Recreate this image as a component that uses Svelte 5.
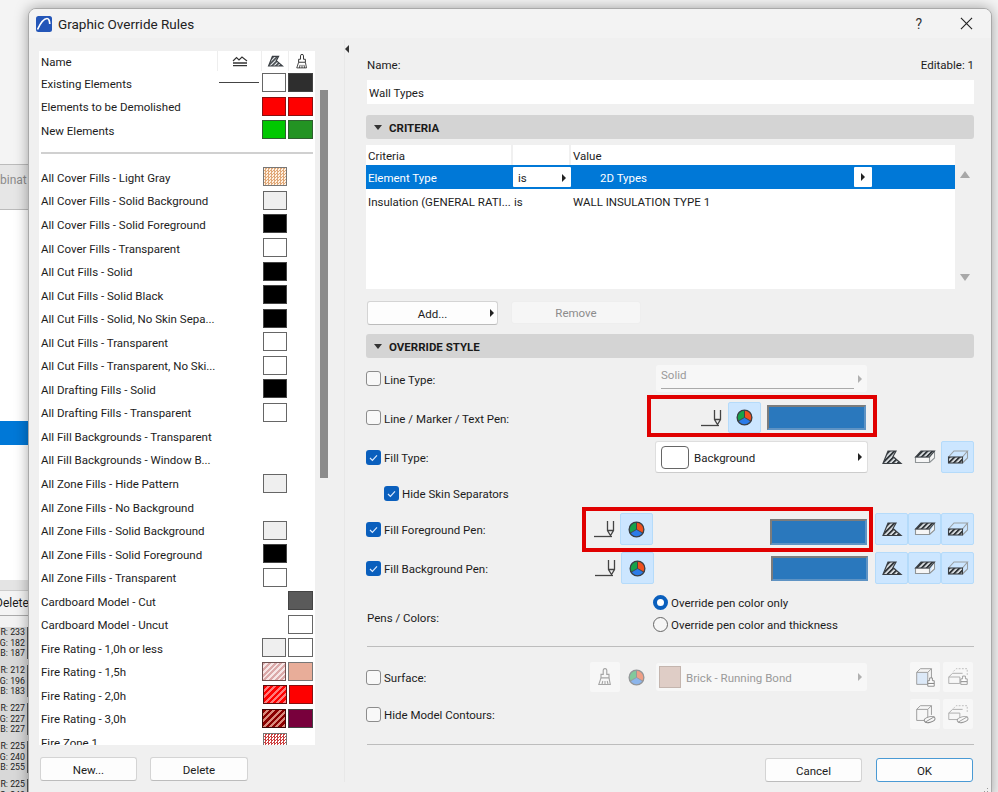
<script>
  const top = [
    ['Existing Elements', 'white', 'dark', true],
    ['Elements to be Demolished', 'red', 'red'],
    ['New Elements', 'green', 'dgreen']
  ];
  const rows = [
    ['All Cover Fills - Light Gray', 'tan', ''],
    ['All Cover Fills - Solid Background', 'light', ''],
    ['All Cover Fills - Solid Foreground', 'black', ''],
    ['All Cover Fills - Transparent', 'white', ''],
    ['All Cut Fills - Solid', 'black', ''],
    ['All Cut Fills - Solid Black', 'black', ''],
    ['All Cut Fills - Solid, No Skin Sepa...', 'black', ''],
    ['All Cut Fills - Transparent', 'white', ''],
    ['All Cut Fills - Transparent, No Ski...', 'white', ''],
    ['All Drafting Fills - Solid', 'black', ''],
    ['All Drafting Fills - Transparent', 'white', ''],
    ['All Fill Backgrounds - Transparent', '', ''],
    ['All Fill Backgrounds - Window B...', '', ''],
    ['All Zone Fills - Hide Pattern', 'light', ''],
    ['All Zone Fills - No Background', '', ''],
    ['All Zone Fills - Solid Background', 'light', ''],
    ['All Zone Fills - Solid Foreground', 'black', ''],
    ['All Zone Fills - Transparent', 'white', ''],
    ['Cardboard Model - Cut', '', 'grey'],
    ['Cardboard Model - Uncut', '', 'white'],
    ['Fire Rating - 1,0h or less', 'light', 'white'],
    ['Fire Rating - 1,5h', 'pinkh', 'salmon'],
    ['Fire Rating - 2,0h', 'redh', 'red'],
    ['Fire Rating - 3,0h', 'maroonh', 'maroon'],
    ['Fire Zone 1', 'dots', '']
  ];
  const rgb = [[233, 182, 187], [212, 196, 183], [227, 227, 227], [225, 240, 255], [225, 240, 255]];
</script>

{#snippet wheel(cls = '')}
  <svg class="wheel {cls}" viewBox="0 0 18 18">
    <path d="M9 9V1.2A7.8 7.8 0 0 0 2.2 12.9Z" fill="#16a34a" />
    <path d="M9 9V1.2A7.8 7.8 0 0 1 15.8 12.9Z" fill="#f0501e" />
    <path d="M9 9L2.2 12.9A7.8 7.8 0 0 0 15.8 12.9Z" fill="#2b7be8" />
    <circle cx="9" cy="9" r="7.8" fill="none" stroke="#3a3f44" stroke-width="1.4" />
    <path d="M9 9V1.2M9 9L2.2 12.9M9 9L15.8 12.9" stroke="#3a3f44" stroke-width="1" />
  </svg>
{/snippet}

{#snippet pen()}
  <svg class="pen" viewBox="0 0 24 22">
    <path d="M1 18.5H19" stroke="#444" stroke-width="1.3" fill="none" />
    <path d="M14.5 3V12.5L17.5 17.5L20.5 12.5V3M14.5 12.5H20.5" stroke="#444" stroke-width="1.3" fill="none" />
  </svg>
{/snippet}

{#snippet fillIcon()}
  <svg class="ic" viewBox="0 0 22 18">
    <path d="M2 15.5L7 3H15L12 8.5L20 15.5Z" fill="url(#hatch)" stroke="#3a3f44" stroke-width="1.2" />
  </svg>
{/snippet}

{#snippet boxTop()}
  <svg class="ic" viewBox="0 0 22 18">
    <path d="M1.5 9H15.5V14.5H1.5ZM15.5 14.5L20.5 10V3" fill="#f6f6f6" stroke="#8f9496" stroke-width="1.1" />
    <path d="M1.5 9L7 3H20.5L15.5 9Z" fill="url(#hatch)" stroke="#3a3f44" stroke-width="1.1" />
  </svg>
{/snippet}

{#snippet boxFront()}
  <svg class="ic" viewBox="0 0 22 18">
    <path d="M1.5 9L7 3H20.5L15.5 9M20.5 3V10L15.5 15" fill="none" stroke="#9a9fa2" stroke-width="1.1" />
    <rect x="1.5" y="9" width="14" height="6" fill="url(#hatch)" stroke="#3a3f44" stroke-width="1.1" />
  </svg>
{/snippet}

{#snippet trio()}
  <div class="trio">
    <span class="tb on">{@render fillIcon()}</span>
    <span class="tb on">{@render boxTop()}</span>
    <span class="tb on">{@render boxFront()}</span>
  </div>
{/snippet}

{#snippet brush(cls)}
  <svg class={cls} viewBox="0 0 18 20">
    <path d="M7 2.5a2 2 0 0 1 4 0V7h2.5v4H4.5V7H7Z" fill="none" stroke="currentColor" stroke-width="1.3" />
    <path d="M4.5 11L2 18.5H15L13.5 11M6.5 14.5L5.5 18.5M9 14.5V18.5M11.5 14.5L12.5 18.5" fill="none" stroke="currentColor" stroke-width="1.2" />
  </svg>
{/snippet}

{#snippet check(on, cls = '')}
  <span class="cb {cls}" class:checked={on}>
    {#if on}<svg viewBox="0 0 15 15"><path d="M4 8l2.4 2.4L11 5.4" fill="none" stroke="#dbeaff" stroke-width="1.2" /></svg>{/if}
  </span>
{/snippet}

{#snippet sw(kind)}
  {#if kind}<span class="sw {kind}"></span>{:else}<span class="sw none"></span>{/if}
{/snippet}

<svg class="defs" width="0" height="0" aria-hidden="true">
  <defs>
    <pattern id="hatch" width="3.6" height="3.6" patternUnits="userSpaceOnUse" patternTransform="rotate(45)">
      <rect width="3.6" height="3.6" fill="#eef2f5" />
      <rect width="2" height="3.6" fill="#33383c" />
    </pattern>
  </defs>
</svg>

<div class="page">
  <aside class="strip">
    <div class="s-top"></div>
    <div class="s-band">binat</div>
    <div class="s-white"></div>
    <div class="s-sel"></div>
    <div class="s-white2"></div>
    <div class="s-grey"></div>
    <div class="s-del">Delete</div>
    <div class="s-gap"></div>
    <div class="s-rgb">
      {#each rgb as c}
        <div class="s-col"><span>R: {c[0]}</span><span>G: {c[1]}</span><span>B: {c[2]}</span></div>
      {/each}
    </div>
  </aside>

  <section class="dialog">
    <header class="title">
      <svg class="logo" viewBox="0 0 16 16">
        <rect width="16" height="16" rx="2.5" fill="#2456b8" />
        <path d="M1.5 13.5C4.5 7 7.5 2.5 11 2.5C13 2.5 13.6 5 13.8 8" fill="none" stroke="#fff" stroke-width="1.7" />
      </svg>
      <span class="ttext">Graphic Override Rules</span>
      <span class="help">?</span>
      <svg class="close" viewBox="0 0 14 14"><path d="M1 1L13 13M13 1L1 13" stroke="#222" stroke-width="1.2" /></svg>
    </header>

    <div class="body">
      <div class="left">
        <div class="list-wrap">
          <div class="list">
            <div class="lhead">
              <span class="lh-name">Name</span>
              <span class="lh-ic c1">
                <svg viewBox="0 0 16 12" class="hic"><path d="M1 6L4.5 2.5L7 5L10 2L15 6" fill="none" stroke="#333" stroke-width="1.1" /><path d="M1 8H15M1 10.6H15" stroke="#333" stroke-width="1.3" /></svg>
              </span>
              <span class="lh-ic c2">
                <svg viewBox="0 0 22 18" class="hic2"><path d="M2 15.5L7 3H15L12 8.5L20 15.5Z" fill="url(#hatch)" stroke="#3a3f44" stroke-width="1.5" /></svg>
              </span>
              <span class="lh-ic c3">{@render brush('hbrush')}</span>
            </div>
            {#each top as r}
              <div class="row">
                <span class="rname">{r[0]}</span>
                {#if r[3]}<span class="lineprev"></span>{/if}
                {@render sw(r[1])}
                {@render sw(r[2])}
              </div>
            {/each}
            <div class="lsep"></div>
            {#each rows as r}
              <div class="row">
                <span class="rname">{r[0]}</span>
                {@render sw(r[1])}
                {@render sw(r[2])}
              </div>
            {/each}
          </div>
          <div class="track"><div class="thumb"></div></div>
        </div>
        <div class="lbtns">
          <span class="btn w97">New...</span>
          <span class="btn w98">Delete</span>
        </div>
      </div>

      <div class="vline"><span class="tri"></span></div>

      <div class="right">
        <div class="namerow"><span>Name:</span><span>Editable: 1</span></div>
        <div class="nameinput">Wall Types</div>

        <div class="sect s1"><i class="down"></i>CRITERIA</div>

        <div class="crit">
          <div class="table">
            <div class="thead">
              <span class="t1">Criteria</span><span class="t2"></span><span class="t3">Value</span>
            </div>
            <div class="tsel">
              <span class="t1">Element Type</span>
              <span class="is">is<i class="arr"></i></span>
              <span class="v2d">2D Types</span>
              <span class="varr"><i class="arr"></i></span>
            </div>
            <div class="trow">
              <span class="t1">Insulation (GENERAL RATI...</span><span class="t2">is</span><span class="t3">WALL INSULATION TYPE 1</span>
            </div>
          </div>
          <div class="tscroll"><i class="up"></i><i class="dn"></i></div>
        </div>

        <div class="critbtns">
          <span class="btn add">Add...<i class="arr"></i></span>
          <span class="btn remove">Remove</span>
        </div>

        <div class="sect s2"><i class="down"></i>OVERRIDE STYLE</div>

        <div class="frow r-line">
          {@render check(false)}<span class="lab">Line Type:</span>
          <span class="combo dis">
            <span class="solid">Solid</span><i class="arr g"></i>
          </span>
          <span class="sp106"></span>
        </div>

        <div class="frow r-pen">
          {@render check(false)}<span class="lab">Line / Marker / Text Pen:</span>
          {@render pen()}
          <span class="cbtn on a">{@render wheel()}</span>
          <span class="bluesw p1"></span>
          <span class="sp108"></span>
        </div>

        <div class="frow r-fill">
          {@render check(true)}<span class="lab">Fill Type:</span>
          <span class="combo">
            <span class="whitesw"></span><span class="ctext">Background</span><i class="arr"></i>
          </span>
          <div class="trio">
            <span class="tb">{@render fillIcon()}</span>
            <span class="tb">{@render boxTop()}</span>
            <span class="tb on">{@render boxFront()}</span>
          </div>
        </div>

        <div class="frow r-skin">
          {@render check(true, 'ind')}<span class="lab">Hide Skin Separators</span>
        </div>

        <div class="frow r-fg">
          {@render check(true)}<span class="lab">Fill Foreground Pen:</span>
          {@render pen()}
          <span class="cbtn on">{@render wheel()}</span>
          <span class="bluesw p2"></span>
          {@render trio()}
        </div>

        <div class="frow r-bg">
          {@render check(true)}<span class="lab">Fill Background Pen:</span>
          {@render pen()}
          <span class="cbtn on">{@render wheel()}</span>
          <span class="bluesw p3"></span>
          {@render trio()}
        </div>

        <div class="frow r-pens">
          <span class="penslab">Pens / Colors:</span>
          <div class="radios">
            <div class="radio"><span class="rd sel"></span><span class="rt">Override pen color only</span></div>
            <div class="radio"><span class="rd"></span><span class="rt">Override pen color and thickness</span></div>
          </div>
        </div>

        <div class="hr h1"></div>

        <div class="frow r-surf">
          {@render check(false)}<span class="lab">Surface:</span>
          <span class="dbtn">{@render brush('dbrush')}</span>
          {@render wheel('faded')}
          <span class="combo dis brick">
            <span class="bricksw"></span><span class="ctext">Brick - Running Bond</span><i class="arr g"></i>
          </span>
          <span class="dbtn mr">
            <svg class="sic" viewBox="0 0 26 26">
              <path d="M4 8L8 4H20V14M16 8L20 4" fill="#f4f4f4" stroke="#999" />
              <path d="M4 8H16V21H4Z" fill="#dce9f8" stroke="#999" />
              <path d="M18 14h3v3h2v3h-7v-3h2Z M16 20h7v3h-7Z" fill="#fff" stroke="#888" />
            </svg>
          </span>
          <span class="dbtn">
            <svg class="sic" viewBox="0 0 26 26">
              <path d="M8 7L11 4H23V11" fill="none" stroke="#bbb" stroke-dasharray="2 1.5" />
              <path d="M3 20V13L7 9H18M3 13H15V20H3" fill="none" stroke="#aaa" />
              <path d="M18 12h3v3h2v3h-7v-3h2Z M16 18h7v3h-7Z" fill="#fff" stroke="#999" />
            </svg>
          </span>
        </div>

        <div class="frow r-model">
          {@render check(false)}<span class="lab">Hide Model Contours:</span>
          <span class="dbtn mr">
            <svg class="sic" viewBox="0 0 26 26">
              <path d="M4 8H16V20H4ZM4 8L8 4H20V14M16 8L20 4" fill="none" stroke="#999" />
              <ellipse cx="18" cy="19" rx="6" ry="3" transform="rotate(-15 18 19)" fill="#f7f7f7" stroke="#888" />
              <path d="M13 22L23 16" stroke="#888" />
            </svg>
          </span>
          <span class="dbtn">
            <svg class="sic" viewBox="0 0 26 26">
              <path d="M8 7L11 4H23V11" fill="none" stroke="#bbb" stroke-dasharray="2 1.5" />
              <path d="M3 19V12L7 8H18M3 12H15V19H3" fill="none" stroke="#aaa" />
              <ellipse cx="18" cy="19" rx="6" ry="3" transform="rotate(-15 18 19)" fill="#f7f7f7" stroke="#999" />
              <path d="M13 22L23 16" stroke="#999" />
            </svg>
          </span>
        </div>

        <div class="hr h2"></div>

        <div class="okrow">
          <span class="btn w97">Cancel</span>
          <span class="btn w97 ok">OK</span>
        </div>

        <div class="redbox b1"></div>
        <div class="redbox b2"></div>
      </div>
    </div>
    <svg class="grip" viewBox="0 0 10 10"><path d="M8 1h1v1H8zM5 4h1v1H5zM8 4h1v1H8zM2 7h1v1H2zM5 7h1v1H5zM8 7h1v1H8z" fill="#999" /></svg>
  </section>
</div>

<style>
  :global(body) { margin: 0; background: #f4f4f4; }
  * { box-sizing: border-box; }
  .defs { position: absolute; }
  .page {
    width: 998px; height: 792px; overflow: hidden; display: flex;
    font-family: Roboto, "Open Sans", sans-serif; font-size: 11.5px; color: #1c1c1c;
    background: #f4f4f4;
  }
  i { display: block; font-style: normal; }

  .strip { width: 28px; flex: none; display: flex; flex-direction: column; overflow: hidden; }
  .strip > div { flex: none; }
  .s-top { height: 165px; background: #f4f4f4; border-bottom: 1px solid #bbb; }
  .s-band { height: 44px; background: #e6e6e6; color: #8a8a8a; font-size: 12px; line-height: 30px; white-space: nowrap; }
  .s-white { height: 212px; background: #fff; box-shadow: inset 0 36px 0 -35px #bbb; }
  .s-sel { height: 24px; background: #0078d7; }
  .s-white2 { height: 135px; background: #fff; }
  .s-grey { height: 11px; background: #e4e4e4; border-bottom: 1px solid #ccc; }
  .s-del { height: 25px; background: #f4f4f4; font-size: 12px; line-height: 25px; white-space: nowrap; border-bottom: 1px solid #aaa; text-indent: -5px; overflow: hidden; }
  .s-gap { height: 11px; background: #f2f2f2; }
  .s-rgb { flex: 1; background: #d8d8d8; display: flex; flex-direction: column; gap: 6px; }
  .s-col { display: flex; flex-direction: column; align-items: flex-end; padding-right: 2px; font-size: 8.8px; line-height: 10.5px; height: 32px; flex: none; border-right: 1px solid #555; white-space: nowrap; }

  .dialog {
    position: relative; width: 964px; height: 790px; margin-top: 8px; flex: none;
    background: #f0f0f0; border: 1px solid #a9a9a9; border-radius: 8px 8px 0 0;
    box-shadow: 0 0 14px rgba(0, 0, 0, 0.35);
    overflow: hidden;
  }
  .title { height: 29px; margin-bottom: 2px; display: flex; align-items: center; padding-left: 7px; background: #f3f3f3; }
  .logo { width: 16px; height: 16px; }
  .ttext { margin-left: 6px; font-size: 13.5px; color: #222; flex: 1; }
  .help { font-size: 14px; margin-right: 38px; color: #333; }
  .close { width: 13px; height: 13px; margin-right: 18px; }

  .body { display: flex; }
  .left { width: 315px; flex: none; padding: 11px 0 0 10px; }
  .list-wrap { display: flex; height: 694px; }
  .list { width: 276px; height: 694px; overflow: hidden; background: #fff; flex: none; }
  .lhead { height: 20px; display: flex; align-items: center; position: relative; }
  .lh-name { padding-left: 2px; width: 178px; height: 20px; line-height: 22px; }
  .lh-ic { height: 20px; display: flex; align-items: center; justify-content: center; border-left: 1px solid #eee; }
  .c1 { width: 44px; } .c2 { width: 27px; } .c3 { width: 27px; }
  .hic { width: 16px; height: 12px; }
  .hic2 { width: 17px; height: 14px; }
  .hbrush { width: 14px; height: 15px; color: #333; }
  .row { height: 23.56px; display: flex; align-items: center; position: relative; justify-content: flex-end; gap: 2px; padding-right: 2px; }
  .rname { margin-right: auto; padding-left: 2px; padding-top: 2px; white-space: nowrap; }
  .lineprev { width: 40px; height: 1px; background: #444; margin-right: 1px; }
  .lsep { height: 2px; background: #d0d0d0; margin: 10.8px 2px 10.7px 2px; }

  .sw { width: 24px; height: 19px; flex: none; border: 1px solid #444; }
  .sw.none { border: 0; background: none; }
  .sw.white { background: #fff; border: 1.5px solid #666; }
  .sw.light { background: #efefef; border: 1.5px solid #666; }
  .sw.dark { background: #2e2e2e; width: 25px; }
  .sw.red { background: #fe0000; border-color: #8a1010; }
  .sw.green { background: #00c800; border-color: #2f5f2f; }
  .sw.dgreen { background: #239323; width: 25px; border-color: #2f5f2f; }
  .sw.black { background: #000; }
  .sw.grey { background: #5a5a5a; width: 25px; }
  .sw.salmon { background: #e8ad99; width: 25px; border-color: #777; }
  .sw.maroon { background: #78003c; width: 25px; }
  .row .sw.red + .sw.red, .row .sw.white + .sw.white, .row .sw.light + .sw.white, .row .sw.none + .sw.white { width: 25px; }
  .sw.tan { background: repeating-conic-gradient(#e0a878 0 25%, #fff1e2 0 50%) 0 0 / 3px 3px; border-color: #777; }
  .sw.pinkh { background: repeating-linear-gradient(135deg, #dba9a9 0 2px, #f6e6e6 2px 4px); border-color: #6d5050; }
  .sw.redh { background: repeating-linear-gradient(135deg, #ff0000 0 2.5px, #ff7a7a 2.5px 4.5px); border-color: #5b1010; }
  .sw.maroonh { background: repeating-linear-gradient(135deg, #8a0000 0 2.5px, #d88a7c 2.5px 4.5px); border-color: #3a0a0a; }
  .sw.dots { background: repeating-conic-gradient(#cc4040 0 25%, #fff 0 50%) 0 0 / 3px 3px; border-color: #777; }
  .track { width: 8px; margin-left: 5px; flex: none; }
  .thumb { height: 388px; margin-top: 39px; background: #8b8b8b; }

  .lbtns { display: flex; gap: 13px; margin-top: 12px; padding-left: 1px; }
  .btn {
    display: flex; align-items: center; justify-content: center; height: 24px; position: relative;
    background: #fdfdfd; border: 1px solid #d4d4d4; border-bottom-color: #bcbcbc; border-radius: 3px; padding-top: 1px;
  }
  .w97 { width: 97px; }
  .w98 { width: 98px; }

  .vline { width: 22px; flex: none; position: relative; border-left: 1px solid #e8e8e8; }
  .tri { position: absolute; left: 0; top: 5px; width: 0; height: 0; border-style: solid; border-width: 4px 4px 4px 0; border-color: transparent #333 transparent transparent; }

  .right { width: 608px; flex: none; position: relative; }
  .namerow { margin-top: 17px; height: 15px; padding-left: 1px; display: flex; justify-content: space-between; align-items: center; }
  .nameinput { margin: 8px 0 0 1px; height: 24px; background: #fff; line-height: 26px; padding-left: 2px; }
  .sect { height: 24px; background: #d4d4d4; border-radius: 3px; display: flex; align-items: center; padding-left: 8px; padding-top: 1px; font-weight: 700; font-size: 11.5px; color: #1a1a1a; }
  .s1 { margin-top: 11px; }
  .s2 { margin-top: 9px; }
  .down { width: 0; height: 0; margin-right: 7px; border-style: solid; border-width: 5px 4px 0 4px; border-color: #333 transparent transparent transparent; }

  .crit { display: flex; margin-top: 6px; height: 144px; }
  .table { width: 589px; background: #fff; flex: none; }
  .thead { height: 20px; display: flex; align-items: center; }
  .t1 { width: 145px; padding-left: 2px; padding-top: 2px; flex: none; white-space: nowrap; overflow: hidden; }
  .t2 { width: 60px; flex: none; padding-left: 3px; padding-top: 2px; }
  .t3 { flex: 1; padding-left: 2px; padding-top: 2px; white-space: nowrap; }
  .thead .t2 { height: 20px; border-left: 2px solid #f0f0f0; border-right: 2px solid #f0f0f0; }
  .tsel { height: 24px; background: #0078d7; color: #fff; display: flex; align-items: center; }
  .is { width: 58px; height: 20px; margin-left: 2px; background: #fff; color: #1c1c1c; display: flex; align-items: center; justify-content: space-between; padding: 1px 5px 0; flex: none; border-radius: 1px; }
  .v2d { width: 283px; padding-left: 29px; padding-top: 2px; flex: none; }
  .varr { width: 18px; height: 20px; background: #fff; display: flex; align-items: center; justify-content: center; flex: none; border-radius: 1px; }
  .trow { height: 24px; display: flex; align-items: center; }
  .arr { width: 0; height: 0; border-style: solid; border-width: 4px 0 4px 4.5px; border-color: transparent transparent transparent #222; }
  .arr.g { border-left-color: #b0b0b0; }
  .tscroll { flex: 1; display: flex; flex-direction: column; align-items: center; position: relative; }
  .up { margin-top: 26px; width: 0; height: 0; border-style: solid; border-width: 0 5px 7px 5px; border-color: transparent transparent #a8a8a8 transparent; }
  .dn { margin-top: 96px; width: 0; height: 0; border-style: solid; border-width: 7px 5px 0 5px; border-color: #a8a8a8 transparent transparent transparent; }

  .critbtns { display: flex; margin-top: 12px; gap: 13px; padding-left: 1px; }
  .add { width: 131px; }
  .add .arr { position: absolute; right: 3px; top: 7px; }
  .remove { width: 130px; height: 23px; background: #f6f6f6; border-color: #eee; color: #8c8c8c; }

  .frow { display: flex; align-items: center; position: relative; }
  .cb { width: 15px; height: 15px; flex: none; border: 1.5px solid #8c8c8c; border-radius: 3px; background: #f8f8f8; }
  .cb.checked { background: #0a5fbd; border: 0; }
  .cb svg { display: block; width: 15px; height: 15px; }
  .lab { margin-left: 3px; margin-right: auto; padding-top: 2px; white-space: nowrap; }
  .ind { margin-left: 18px; }

  .r-line { margin-top: 6px; height: 29px; }
  .r-pen { margin-top: 9px; height: 31px; }
  .r-fill { margin-top: 8px; height: 32px; }
  .r-skin { margin-top: 10px; height: 20px; }
  .r-fg { margin-top: 10px; height: 32px; }
  .r-bg { margin-top: 7px; height: 32px; }
  .r-pens { margin-top: 8px; height: 42px; }
  .r-surf { margin-top: 15px; height: 30px; }
  .r-model { margin-top: 7px; height: 30px; }

  .combo { width: 213px; height: 100%; background: #fff; border: 1px solid #dedede; border-bottom-color: #ccc; border-radius: 3px; display: flex; align-items: center; padding: 0 5px; flex: none; }
  .combo .arr { margin-left: auto; }
  .combo.dis { background: #f7f7f7; border-color: #f0f0f0; color: #9a9a9a; }
  .solid { flex: 1; margin-right: 4px; height: 21px; border-bottom: 1px solid #aaa; line-height: 15px; }
  .sp106 { width: 106px; flex: none; }
  .sp108 { width: 108px; flex: none; }
  .whitesw { width: 28px; height: 23px; background: #fff; border: 1px solid #666; border-radius: 4px; }
  .ctext { margin-left: 5px; padding-top: 2px; }
  .pen { width: 24px; height: 22px; flex: none; }
  .cbtn { width: 33px; height: 32px; display: flex; align-items: center; justify-content: center; flex: none; border-radius: 2px; }
  .cbtn.on { background: #cce6ff; border: 1px solid #b5dbfa; }
  .cbtn.a { margin-left: 4px; height: 31px; }
  .r-fg .cbtn, .r-bg .cbtn { margin-left: 3px; }
  .wheel { width: 17px; height: 17px; display: block; }
  .wheel.faded { opacity: 0.5; margin-left: 8px; margin-right: 10px; flex: none; }
  .bluesw { height: 25px; background: #2a78bd; border: 2px solid #7c7c7c; border-right-color: #5e93c4; border-bottom-color: #5e93c4; flex: none; }
  .p1 { margin-left: 6px; width: 99px; }
  .p2 { margin-left: 117px; width: 97px; height: 26px; position: relative; top: 3px; }
  .p3 { margin-left: 117px; width: 97px; }
  .trio { display: flex; margin-left: 7px; flex: none; }
  .r-fg .trio { margin-left: 8px; }
  .tb { width: 33px; height: 32px; display: flex; align-items: center; justify-content: center; border-radius: 2px; border: 1px solid transparent; }
  .tb.on { background: #cce6ff; border-color: #b5dbfa; }
  .ic { width: 22px; height: 18px; display: block; }

  .penslab { margin-right: auto; padding-top: 10px; padding-left: 1px; }
  .radios { width: 321px; display: flex; flex-direction: column; gap: 2px; }
  .radio { height: 20px; display: flex; align-items: center; }
  .rt { padding-top: 2px; }
  .rd { width: 15px; height: 15px; border-radius: 50%; border: 1px solid #666; background: #f6f6f6; margin-right: 3px; flex: none; }
  .rd.sel { background: #fff; border: 4px solid #0a5fbd; }

  .hr { height: 1px; background: #bdbdbd; margin-left: 1px; }
  .h1 { margin-top: 12px; }
  .h2 { margin-top: 15px; }

  .dbtn { width: 30px; height: 30px; background: #f7f7f7; border-radius: 2px; display: flex; align-items: center; justify-content: center; flex: none; }
  .dbtn.mr { margin-right: 3px; }
  .dbrush { width: 16px; height: 18px; color: #a5a5a5; }
  .sic { width: 24px; height: 24px; }
  .brick { margin-right: 42px; padding-left: 3px; }
  .bricksw { width: 22px; height: 22px; background: #dfcdc6; border: 1px solid #c4b5ae; }
  .r-surf .dbtn:last-child, .r-model .dbtn:last-child { margin-right: 1px; }

  .okrow { display: flex; justify-content: flex-end; gap: 14px; margin-top: 13px; padding-right: 1px; }
  .ok { border: 1.5px solid #4a9ad4; }

  .redbox { position: absolute; border: 4px solid #e00000; pointer-events: none; }
  .b1 { left: 281px; top: 355px; width: 230px; height: 42px; }
  .b2 { left: 216px; top: 467px; width: 291px; height: 45px; }

  .grip { position: absolute; right: 2px; bottom: 0; width: 10px; height: 10px; }
</style>
